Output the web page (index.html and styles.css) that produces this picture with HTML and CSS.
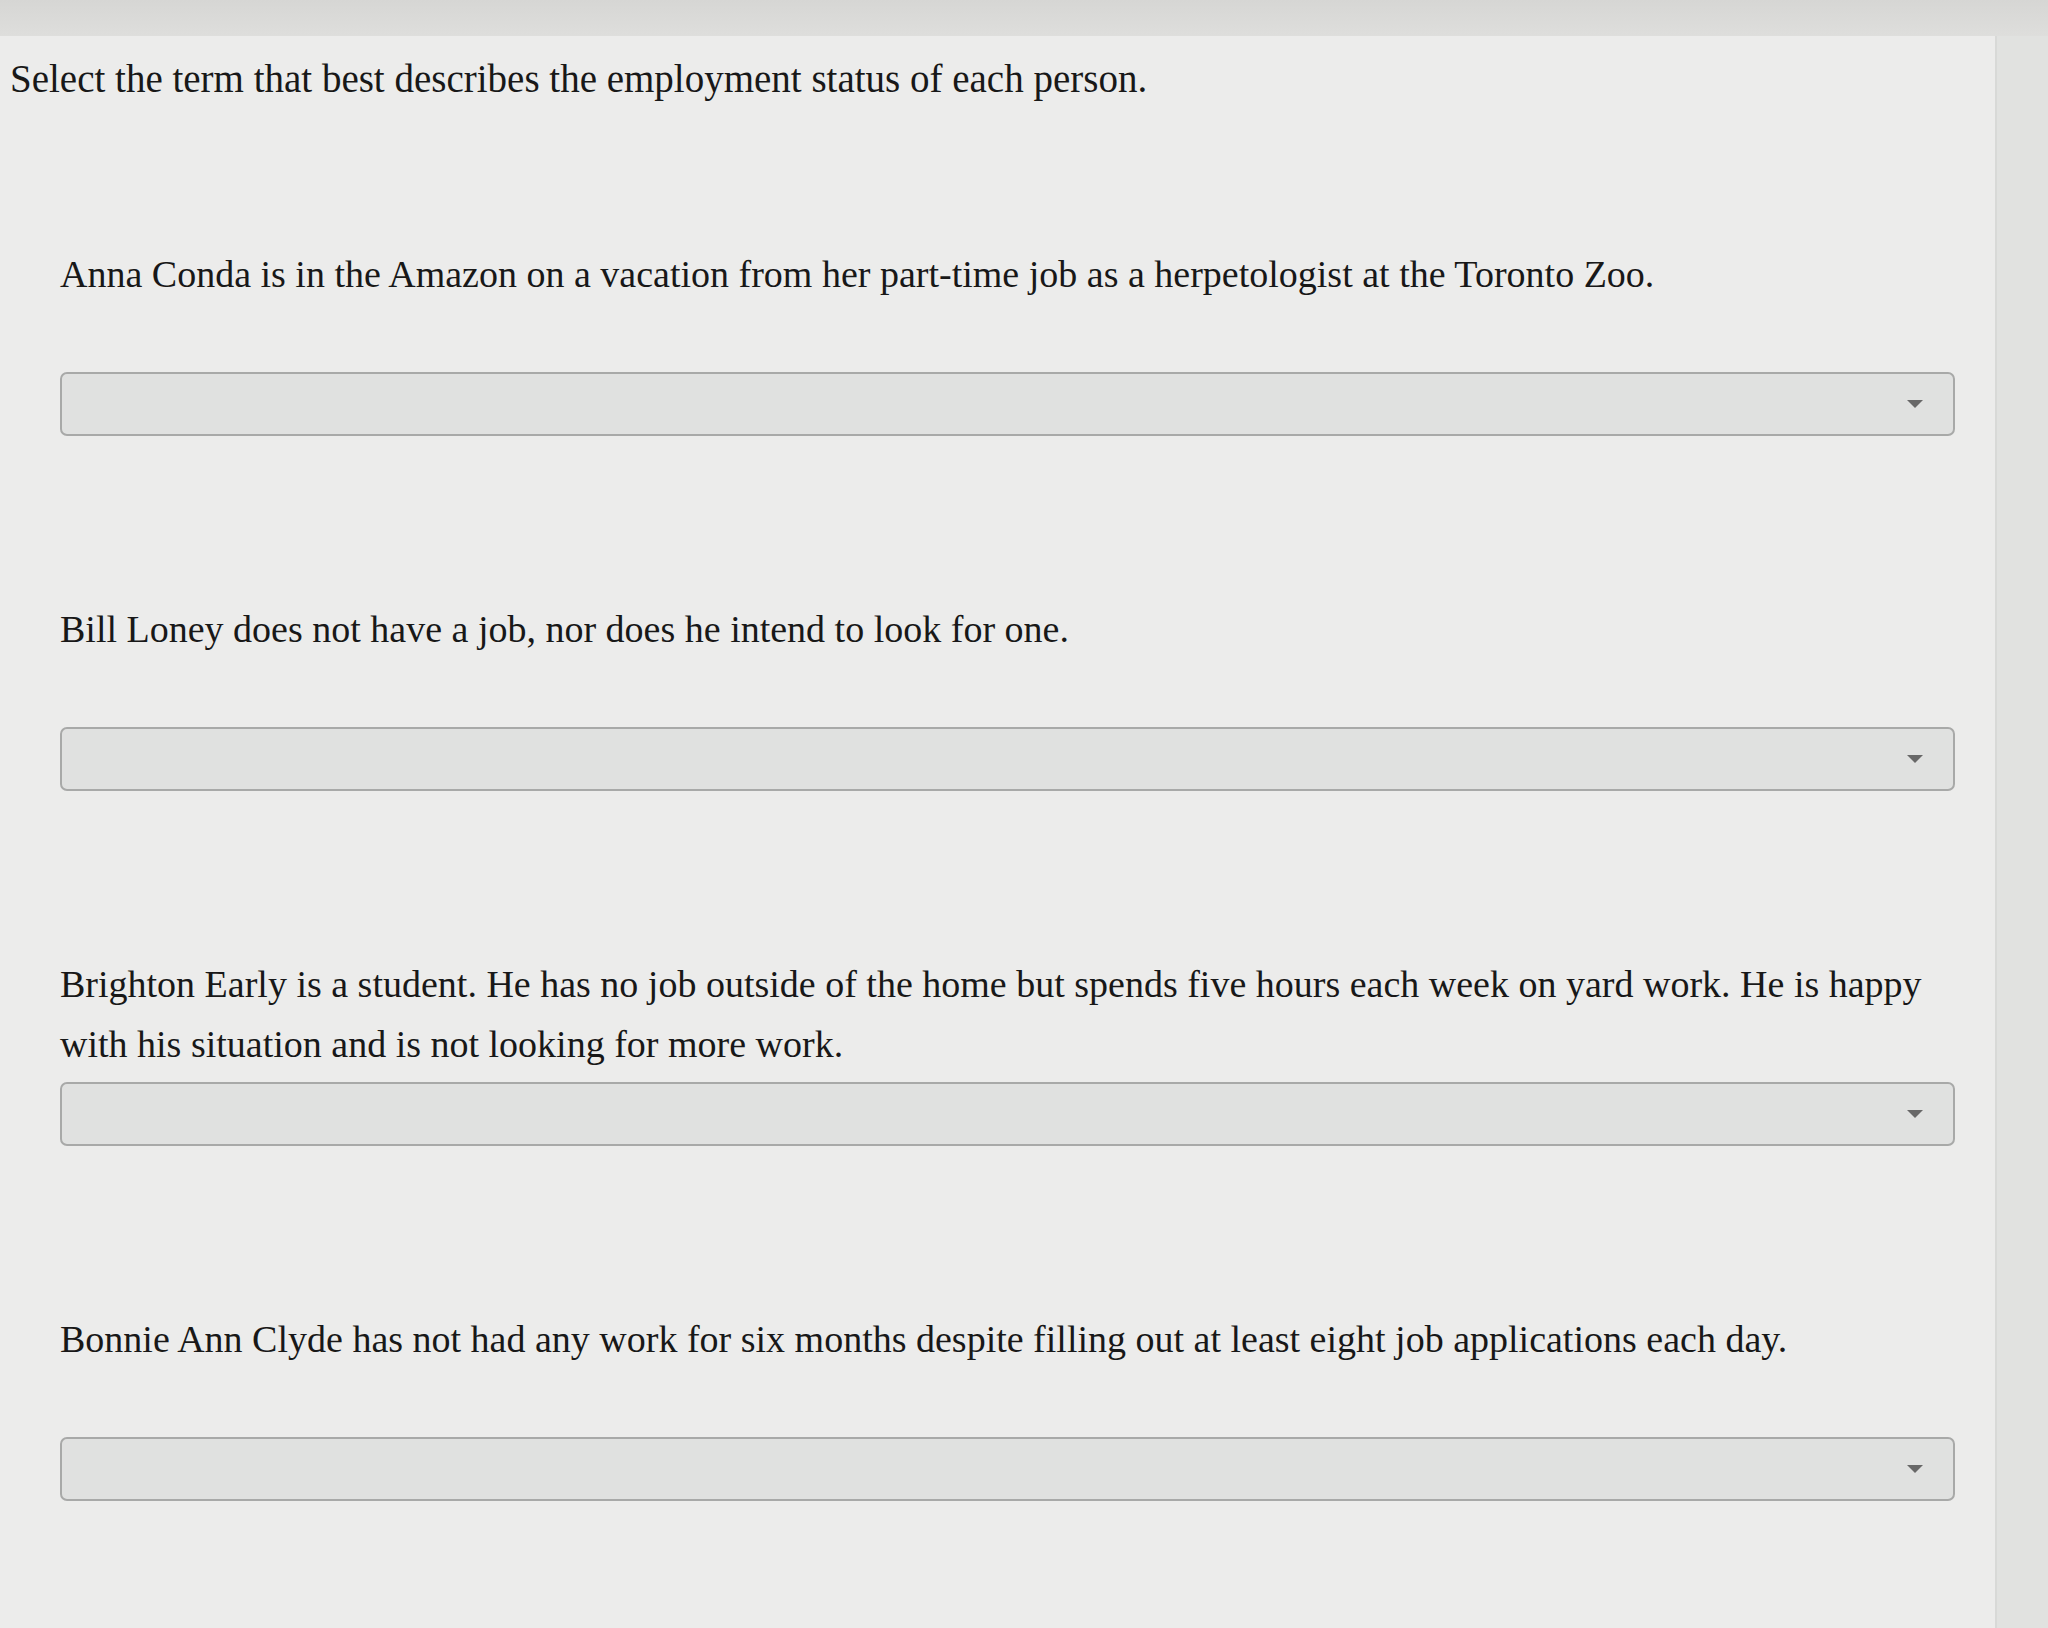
FILE: index.html
```html
<!DOCTYPE html>
<html>
<head>
<meta charset="utf-8">
<link rel="stylesheet" href="styles.css">
</head>
<body>
<div class="screen">
  <div class="topbar"></div>
  <div class="content">
    <div class="panel">
      <p class="prompt">Select the term that best describes the employment status of each person.</p>
      <div class="question">
        <p class="qtext">Anna Conda is in the Amazon on a vacation from her part-time job as a herpetologist at the Toronto Zoo.</p>
        <div class="select"><span class="arrow"></span></div>
      </div>
      <div class="question">
        <p class="qtext">Bill Loney does not have a job, nor does he intend to look for one.</p>
        <div class="select"><span class="arrow"></span></div>
      </div>
      <div class="question">
        <p class="qtext">Brighton Early is a student. He has no job outside of the home but spends five hours each week on yard work. He is happy with his situation and is not looking for more work.</p>
        <div class="select"><span class="arrow"></span></div>
      </div>
      <div class="question">
        <p class="qtext">Bonnie Ann Clyde has not had any work for six months despite filling out at least eight job applications each day.</p>
        <div class="select"><span class="arrow"></span></div>
      </div>
    </div>
    <div class="edge"></div>
  </div>
</div>
</body>
</html>
```

FILE: styles.css
```css
html, body {
  margin: 0;
  padding: 0;
  width: 2048px;
  height: 1628px;
  overflow: hidden;
  background: #ebebea;
  font-family: "Liberation Serif", "Times New Roman", serif;
  color: #181818;
}
.screen {
  display: flex;
  flex-direction: column;
  height: 1628px;
}
.topbar {
  height: 36px;
  background: linear-gradient(to bottom, #d6d6d4, #dededc);
  flex: none;
}
.content {
  flex: 1;
  display: flex;
}
.panel {
  width: 1995px;
  background: #ececeb;
  box-sizing: border-box;
  padding-top: 13px;
}
.edge {
  flex: 1;
  background: #e1e2e0;
  border-left: 2px solid #d8d9d7;
}
.prompt {
  margin: 0 0 135px 10px;
  font-size: 39px;
  line-height: 60px;
}
.question {
  margin: 0 40px 163px 60px;
}
.qtext {
  margin: 0 0 8px 0;
  font-size: 38px;
  line-height: 60px;
  min-height: 120px;
  max-width: 1900px;
}
.select {
  height: 64px;
  border: 2px solid #a8a9a8;
  border-radius: 7px;
  background: #e0e1e0;
  box-sizing: border-box;
  display: flex;
  align-items: center;
  justify-content: flex-end;
  padding-right: 30px;
}
.arrow {
  width: 0;
  height: 0;
  border-left: 8px solid transparent;
  border-right: 8px solid transparent;
  border-top: 8px solid #686868;
}
```
